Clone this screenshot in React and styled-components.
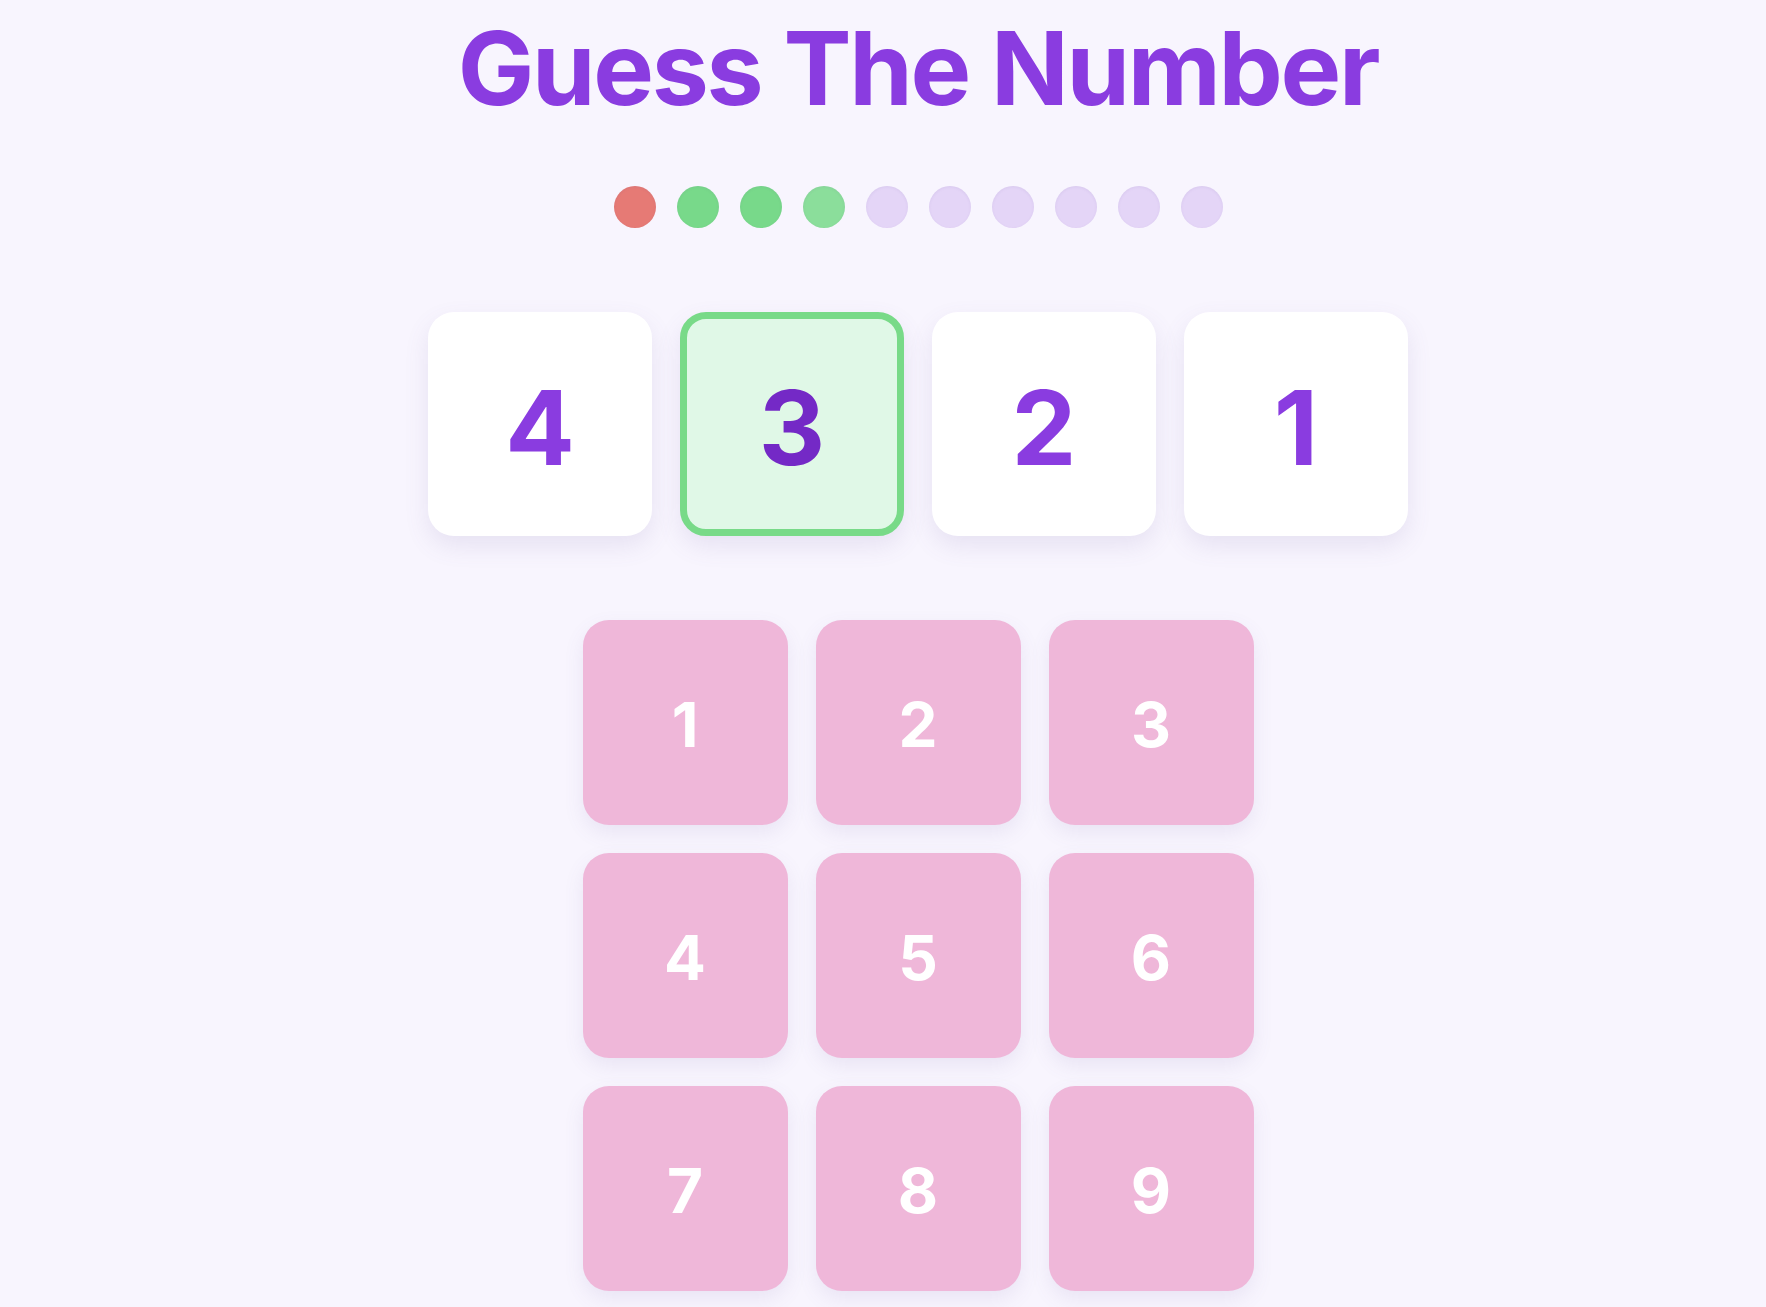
import React from "react";
import styled, { createGlobalStyle } from "styled-components";

const GlobalStyle = createGlobalStyle`
  body {
    margin: 0;
    background: #f8f5fe;
    font-family: Inter, "Liberation Sans", Arial, sans-serif;
  }
`;

const Page = styled.div`
  display: flex;
  flex-direction: column;
  align-items: center;
  padding-left: 70px;
  padding-bottom: 16px;
`;

const Title = styled.h1`
  margin: 17px 0 0;
  font-size: 102px;
  line-height: 103px;
  font-weight: 700;
  letter-spacing: -0.022em;
  color: #8a3ce0;
`;

const Dots = styled.div`
  display: flex;
  gap: 21px;
  margin-top: 66px;
`;

const dotColors = {
  miss: "#e67a75",
  hit: "#78d98a",
  last: "#8bde9b",
  empty: "#e4d5f7",
};

const Dot = styled.span`
  width: 42px;
  height: 42px;
  border-radius: 50%;
  background: ${(props) => dotColors[props.state]};
  box-shadow: inset 0 1px 3px rgba(90, 60, 140, 0.08);
`;

const Cards = styled.div`
  display: flex;
  gap: 28px;
  margin-top: 84px;
`;

const Card = styled.div`
  box-sizing: border-box;
  width: 224px;
  height: 224px;
  padding-top: 6px;
  border-radius: 26px;
  display: flex;
  align-items: center;
  justify-content: center;
  background: ${(props) => (props.active ? "#e0f8e7" : "#ffffff")};
  border: ${(props) => (props.active ? "7px solid #78da88" : "none")};
  box-shadow: 0 10px 24px rgba(110, 90, 160, 0.12);
  color: ${(props) => (props.active ? "#7429c6" : "#8a3ce0")};
  font-size: 103px;
  font-weight: 700;
  line-height: 1;
`;

const Keypad = styled.div`
  display: grid;
  grid-template-columns: repeat(3, 205px);
  grid-auto-rows: 205px;
  gap: 28px;
  margin-top: 84px;
`;

const Key = styled.button`
  border: none;
  border-radius: 26px;
  padding: 4px 0 0;
  background: #efb7d9;
  color: #fff;
  font-family: Inter, "Liberation Sans", Arial, sans-serif;
  font-size: 62px;
  font-weight: 700;
  display: flex;
  align-items: center;
  justify-content: center;
  box-shadow: 0 8px 20px rgba(110, 90, 160, 0.1);
  cursor: pointer;
`;

const attempts = ["miss", "hit", "hit", "last", "empty", "empty", "empty", "empty", "empty", "empty"];
const guess = [4, 3, 2, 1];

const App = () => {
  return (
    <Page>
      <GlobalStyle />
      <Title>Guess The Number</Title>
      <Dots>
        {attempts.map((s, i) => (
          <Dot key={i} state={s} />
        ))}
      </Dots>
      <Cards>
        {guess.map((n, i) => (
          <Card key={i} active={i === 1}>
            {n}
          </Card>
        ))}
      </Cards>
      <Keypad>
        {[1, 2, 3, 4, 5, 6, 7, 8, 9].map((n) => (
          <Key key={n}>{n}</Key>
        ))}
      </Keypad>
    </Page>
  );
};

export default App;
